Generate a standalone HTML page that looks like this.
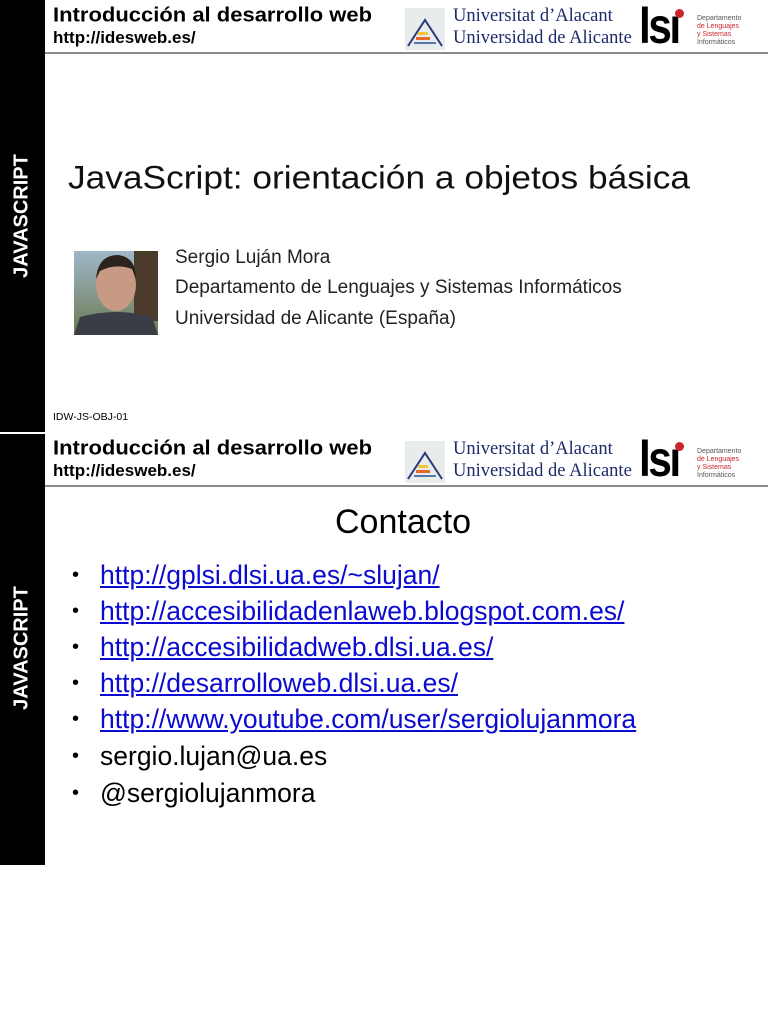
<!DOCTYPE html>
<html><head><meta charset="utf-8"><style>
*{margin:0;padding:0;box-sizing:border-box}
body{width:768px;height:1024px;background:#fff;position:relative;overflow:hidden;font-family:"Liberation Sans",sans-serif;color:#000}
.abs{position:absolute;white-space:nowrap}
.side{position:absolute;left:0;width:45px;background:#000}
.vt{position:absolute;left:22px;color:#fff;font-weight:bold;font-size:20px;transform:translate(-50%,-50%) rotate(-90deg);white-space:nowrap}
.h1{font-weight:bold;font-size:22px;left:53px;transform:scaleY(0.92);transform-origin:top left}
.h2{font-weight:bold;font-size:17px;left:53px}
.line{position:absolute;left:45px;width:723px;height:2px;background:#8a8a8a}
.uni{font-family:"Liberation Serif",serif;color:#1c2a6b;font-size:18.5px;left:453px}
.lsi{font-family:"Liberation Sans",sans-serif;font-size:50px;font-weight:bold;left:639px;letter-spacing:-3px;transform:scaleX(0.85);transform-origin:left}
.dep{font-size:7px;left:697px;line-height:8px;color:#555}
.auth{left:175px;font-size:19px;color:#222}
.li{left:100px;font-size:26.5px}
.li a{color:#0a0ad0;text-decoration:underline}
.bul{left:72px;font-size:20px}
</style></head><body>

<!-- Slide 1 -->
<div class="side" style="top:0;height:432px"></div>
<div class="vt" style="top:216px">JAVASCRIPT</div>
<div class="abs h1" style="top:3px">Introducción al desarrollo web</div>
<div class="abs h2" style="top:28px">http://idesweb.es/</div>
<svg class="abs" style="left:405px;top:8px" width="40" height="42"><rect width="40" height="42" fill="#e9ecec"/><path d="M3 38 L20 12 L37 38" fill="none" stroke="#2b3a7a" stroke-width="2"/><rect x="13" y="24" width="10" height="3" fill="#f2c53b"/><rect x="11" y="29" width="14" height="3" fill="#e66a2c"/><rect x="9" y="34" width="22" height="2" fill="#5577aa"/></svg>
<div class="abs uni" style="top:6px">Universitat d’Alacant</div>
<div class="abs uni" style="top:28px">Universidad de Alicante</div>
<div class="abs lsi" style="top:-3px">lsı</div>
<div class="abs" style="left:675px;top:9px;width:9px;height:9px;border-radius:50%;background:#c8262c"></div>
<div class="abs dep" style="top:15px">Departamento<br><span style="color:#c8262c">de Lenguajes<br>y Sistemas</span><br>Informáticos</div>
<div class="line" style="top:52px"></div>

<div class="abs" style="left:68px;top:160px;font-size:35.3px;color:#111;transform:scaleY(0.92);transform-origin:top left">JavaScript: orientación a objetos básica</div>
<svg class="abs" style="left:74px;top:251px" width="84" height="84"><defs><linearGradient id="g" x1="0" y1="0" x2="0" y2="1"><stop offset="0" stop-color="#9fb7c9"/><stop offset="1" stop-color="#6d7a52"/></linearGradient></defs><rect width="84" height="84" fill="url(#g)"/><rect x="60" y="0" width="24" height="70" fill="#4a3b2a"/><ellipse cx="42" cy="34" rx="20" ry="26" fill="#c79a84"/><path d="M22 28 Q24 4 44 4 Q62 6 62 28 L58 18 Q42 12 26 20Z" fill="#2b221c"/><path d="M0 84 L6 66 Q42 56 78 66 L84 84Z" fill="#3a3d45"/></svg>
<div class="abs auth" style="top:247px">Sergio Luján Mora</div>
<div class="abs auth" style="top:277px">Departamento de Lenguajes y Sistemas Informáticos</div>
<div class="abs auth" style="top:308px">Universidad de Alicante (España)</div>
<div class="abs" style="left:53px;top:411px;font-size:10.5px">IDW-JS-OBJ-01</div>

<!-- Slide 2 -->
<div class="side" style="top:434px;height:431px"></div>
<div class="vt" style="top:648px">JAVASCRIPT</div>
<div class="abs h1" style="top:436px">Introducción al desarrollo web</div>
<div class="abs h2" style="top:461px">http://idesweb.es/</div>
<svg class="abs" style="left:405px;top:441px" width="40" height="42"><rect width="40" height="42" fill="#e9ecec"/><path d="M3 38 L20 12 L37 38" fill="none" stroke="#2b3a7a" stroke-width="2"/><rect x="13" y="24" width="10" height="3" fill="#f2c53b"/><rect x="11" y="29" width="14" height="3" fill="#e66a2c"/><rect x="9" y="34" width="22" height="2" fill="#5577aa"/></svg>
<div class="abs uni" style="top:439px">Universitat d’Alacant</div>
<div class="abs uni" style="top:461px">Universidad de Alicante</div>
<div class="abs lsi" style="top:430px">lsı</div>
<div class="abs" style="left:675px;top:442px;width:9px;height:9px;border-radius:50%;background:#c8262c"></div>
<div class="abs dep" style="top:448px">Departamento<br><span style="color:#c8262c">de Lenguajes<br>y Sistemas</span><br>Informáticos</div>
<div class="line" style="top:485px"></div>

<div class="abs" style="left:335px;top:503px;font-size:34px">Contacto</div>
<div class="abs bul" style="top:564px">•</div><div class="abs li" style="top:560px"><a>http://gplsi.dlsi.ua.es/~slujan/</a></div>
<div class="abs bul" style="top:600px">•</div><div class="abs li" style="top:596px"><a>http://accesibilidadenlaweb.blogspot.com.es/</a></div>
<div class="abs bul" style="top:636px">•</div><div class="abs li" style="top:632px"><a>http://accesibilidadweb.dlsi.ua.es/</a></div>
<div class="abs bul" style="top:672px">•</div><div class="abs li" style="top:668px"><a>http://desarrolloweb.dlsi.ua.es/</a></div>
<div class="abs bul" style="top:708px">•</div><div class="abs li" style="top:704px"><a>http://www.youtube.com/user/sergiolujanmora</a></div>
<div class="abs bul" style="top:745px">•</div><div class="abs li" style="top:741px">sergio.lujan@ua.es</div>
<div class="abs bul" style="top:782px">•</div><div class="abs li" style="top:778px">@sergiolujanmora</div>
</body></html>
